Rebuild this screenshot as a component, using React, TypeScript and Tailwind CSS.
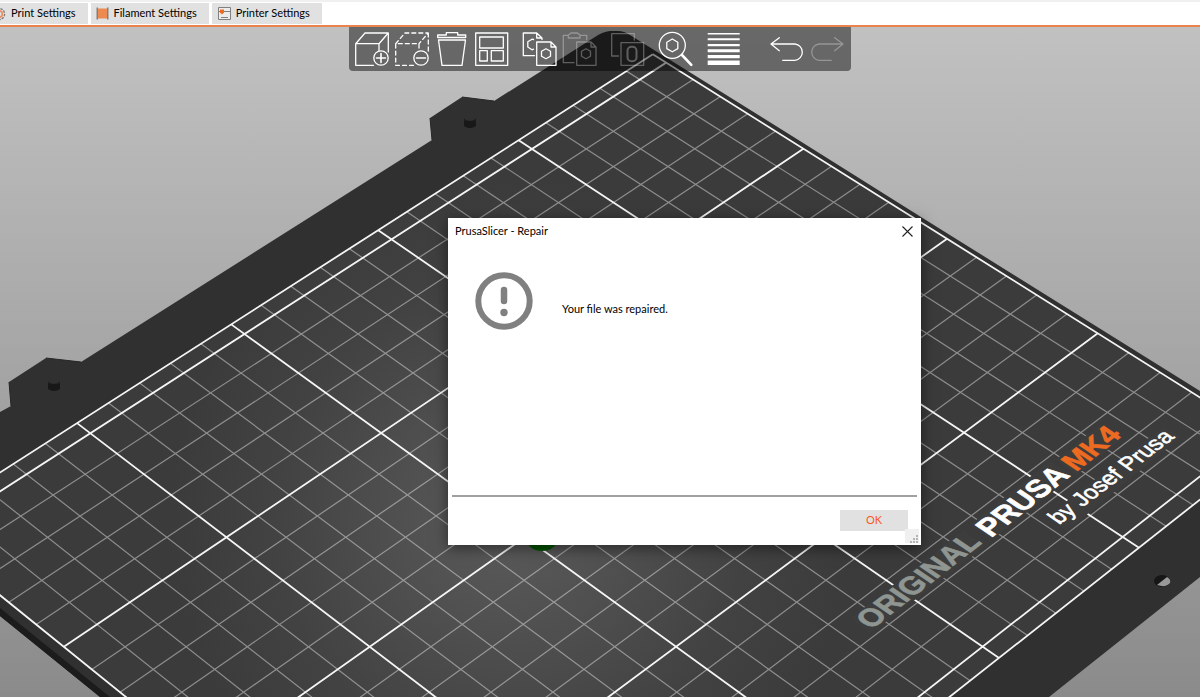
import type { ReactNode } from 'react'

const UI_FONT = 'font-[Lato,sans-serif]'

// Projects a point of the 250 x 210 mm bed onto the screen
function project(b: number, a: number) {
  const u = (b - 100) / 100
  const v = a / 150
  const d = 1 + 0.04734 * u - 0.07275 * v
  const x = (244.5 + 312.68 * u + 382.32 * v) / d
  const y = (334 - 177.95 * u + 265.65 * v) / d
  return [x, y]
}

function segment(b1: number, a1: number, b2: number, a2: number) {
  const [x1, y1] = project(b1, a1)
  const [x2, y2] = project(b2, a2)
  return `M${x1.toFixed(2)} ${y1.toFixed(2)}L${x2.toFixed(2)} ${y2.toFixed(2)}`
}

const thinLines: string[] = []
const boldLines: string[] = []

for (let b = 0; b <= 250; b += 10) {
  const target = b % 50 === 0 ? boldLines : thinLines
  target.push(segment(b, -5, b, 205))
}
for (let a = 0; a <= 200; a += 10) {
  const target = a % 50 === 0 ? boldLines : thinLines
  target.push(segment(0, a, 250, a))
}
boldLines.push(segment(0, -5, 250, -5), segment(0, 205, 250, 205))

const bedOutline = [
  [0, -5],
  [250, -5],
  [250, 205],
  [0, 205],
]
  .map(([b, a]) => project(b, a).join(','))
  .join(' ')

function Pin({ x, y }: { x: number; y: number }) {
  return (
    <g transform={`translate(${x} ${y})`}>
      <path d="M-6 -4v7a6 3 0 0 0 12 0v-7a6 3 0 0 1 -12 0z" fill="#181818" />
      <path d="M-6 -4a6 3 0 0 0 12 0v3h-12z" fill="#1f1f1f" />
    </g>
  )
}

function PrintBed() {
  return (
    <svg
      className="absolute inset-0 h-full w-full"
      viewBox="0 27 1200 670"
      preserveAspectRatio="xMidYMid slice"
      aria-hidden="true"
    >
      <defs>
        <radialGradient id="glow" gradientUnits="userSpaceOnUse" cx="510" cy="520" r="340">
          <stop offset="0" stopColor="#5b5b5b" />
          <stop offset="0.35" stopColor="#4f4f4f" />
          <stop offset="0.7" stopColor="#424242" />
          <stop offset="1" stopColor="#3b3b3b" />
        </radialGradient>
      </defs>

      {/* heatbed with its two mounting tabs */}
      <path
        d="M0 412L11 406L9 382L46 358L81 362L432 140L430 118L462 97L494 101L595 37Q602 32 610 31L618 31Q624 31 630 35L800 141L921 217L1200 391V577L1049 697H100L0 616Z"
        fill="#303030"
      />
      <path d="M0 608L110 697H100L0 616Z" fill="#1c1c1c" />
      <path d="M9 382L11 406M430 118L432 140M46 358L81 362M462 97L494 101" stroke="#262626" />
      <Pin x={54} y={385} />
      <Pin x={470} y={122} />
      <ellipse cx="1162" cy="581" rx="8" ry="6" fill="#161616" />
      <path d="M1157 585L1167 577Q1171 579 1170 583Q1166 588 1157 585Z" fill="#999" />

      <polygon points={bedOutline} fill="url(#glow)" />
      <path d={thinLines.join('')} fill="none" stroke="#fff" strokeOpacity="0.42" strokeWidth="1.2" />
      <path d={boldLines.join('')} fill="none" stroke="#fff" strokeOpacity="0.95" strokeWidth="1.8" />

      {/* the grid stops where the lettering is printed */}
      <path
        d="M870 634L851 618L963 530L986 546ZM992 540L970 525L1050 461L1073 476ZM1077 475L1055 460L1101 424L1124 437ZM1067 531L1046 517L1163 427L1181 437Z"
        fill="#3d3d3d"
      />
      <g className="font-['Liberation_Sans',sans-serif]">
        <g fontWeight="bold" strokeWidth="0.7">
          <text
            transform="translate(871 630) rotate(-38) skewX(18)"
            fontSize="29"
            fill="#8f9692"
            stroke="#8f9692"
          >
            ORIGINAL
          </text>
          <text
            transform="translate(991 538) rotate(-38) skewX(18)"
            fontSize="29"
            fill="#fff"
            stroke="#fff"
          >
            PRUSA
          </text>
          <text
            transform="translate(1076 472) rotate(-38) skewX(18)"
            fontSize="28"
            fill="#ed6b21"
            stroke="#ed6b21"
          >
            MK4
          </text>
        </g>
        <text
          transform="translate(1059 525) rotate(-37) skewX(18)"
          fontSize="22"
          fill="#fff"
          stroke="#fff"
          strokeWidth="0.6"
        >
          by Josef Prusa
        </text>
      </g>

      <ellipse cx="542" cy="540" rx="15" ry="11" fill="#005200" />
    </svg>
  )
}

function Tab({ label, icon, className }: { label: string; icon: ReactNode; className: string }) {
  return (
    <button type="button" className={`flex items-center gap-[5px] bg-[#e1e1e1] ${className}`}>
      {icon}
      {label}
    </button>
  )
}

function ToolButton({ label, disabled, children }: { label: string; disabled?: boolean; children: ReactNode }) {
  return (
    <button type="button" aria-label={label} disabled={disabled} className="h-11 w-10 disabled:opacity-30">
      <svg
        viewBox="0 0 40 44"
        className="h-11 w-10"
        fill="none"
        stroke="#fff"
        strokeWidth="1.3"
        strokeLinejoin="round"
        strokeLinecap="round"
      >
        {children}
      </svg>
    </button>
  )
}

const FRONT_PAGE = 'M16.7 15H31L36 20V38.3H16.7ZM31 15V20H36'
const HEXAGON = 'M26 21.7L30.5 24.2V29.2L26 31.7L21.5 29.2V24.2Z'
const UNDO = 'M12.3 10.7L4 17L12.3 23.7M4 17H28A8.2 8.2 0 0 1 28 33.3H15.7'

function Toolbar() {
  return (
    <div
      role="toolbar"
      aria-label="Plater"
      className="relative mx-auto flex w-fit gap-2 rounded-b bg-black/46 pr-1 pl-[3px]"
    >
      <div className="flex">
        <ToolButton label="Add">
          <path d="M21.5 38.3H3.7V16.7H27V23.5M3.7 16.7L13 6H36.3L27 16.7M36.3 6V25" />
          <circle cx="29" cy="31" r="7.2" />
          <path d="M29 26.5V35.5M24.5 31H33.5" strokeWidth="1.6" />
        </ToolButton>
        <ToolButton label="Delete">
          <path d="M21.5 38.3H3.7V16.7H27V23.5M3.7 16.7L13 6H36.3L27 16.7M36.3 6V25" strokeDasharray="4 3" />
          <circle cx="29" cy="31" r="7.2" />
          <path d="M24.5 31H33.5" strokeWidth="1.6" />
        </ToolButton>
        <ToolButton label="Delete all">
          <path d="M5.7 8H14.3V5.7H25.7V8H33.7V10.5H5.7ZM6.5 13H33.5L30 38.3H10Z" />
        </ToolButton>
        <ToolButton label="Arrange">
          <path d="M3.7 6H35.7V38.3H3.7ZM7.7 10H31.3V21H7.7ZM7.7 23.7H15.3V34H7.7ZM19.3 23.7H31.3V34H19.3Z" />
        </ToolButton>
      </div>
      <div className="flex">
        <ToolButton label="Copy">
          <path d="M14.5 28.7H3.3V6H16.7L22 11V12.5M16.7 6V11H22M13.5 12.5L12 12.2L7.8 14.8V20L12 22.8L13.5 22.2" />
          <path d={FRONT_PAGE} />
          <path d={HEXAGON} />
        </ToolButton>
        <ToolButton label="Paste" disabled>
          <path d="M14 35.7H3.3V8.3H8.3M20 8.3H26.7V12.5M8.3 11V8L11 6H17.5L20 8V11Z" />
          <path d={FRONT_PAGE} />
          <path d={HEXAGON} />
        </ToolButton>
      </div>
      <ToolButton label="Instances" disabled>
        <path d="M10.5 29H3.7V6.7H26.3V13M13 15.7H35.7V38.3H13Z" />
        <rect x="19.5" y="19.7" width="9" height="14.5" rx="4" strokeWidth="2" />
      </ToolButton>
      <ToolButton label="Search">
        <circle cx="16.3" cy="18.3" r="13" />
        <path d="M16.3 12L21.8 15.2V21.6L16.3 24.8L10.8 21.6V15.2Z" />
        <path d="M26 28L35.3 37.8" strokeWidth="2.6" />
      </ToolButton>
      <ToolButton label="Variable layer height">
        <path
          d="M3.7 6H35.7V7.5H3.7ZM3.7 11.3H35.7V13.3H3.7ZM3.7 17H35.7V19.3H3.7ZM3.7 22.3H35.7V25.3H3.7ZM3.7 28H35.7V31.3H3.7ZM3.7 33.5H35.7V38H3.7Z"
          fill="#fff"
          stroke="none"
        />
      </ToolButton>
      <div className="ml-[15px] flex">
        <ToolButton label="Undo">
          <path d={UNDO} />
        </ToolButton>
        <ToolButton label="Redo" disabled>
          <path d={UNDO} transform="matrix(-1 0 0 1 40 0)" />
        </ToolButton>
      </div>
    </div>
  )
}

function RepairDialog() {
  return (
    <div
      role="dialog"
      aria-labelledby="dialog-title"
      className="absolute top-[191px] left-[448px] flex h-[327px] w-[473px] flex-col bg-white text-black shadow-[0_3px_14px_rgba(0,0,0,0.5)]"
    >
      <div className="flex h-[26px] items-center justify-between pr-2 pl-[7px]">
        <h1 id="dialog-title">PrusaSlicer - Repair</h1>
        <button type="button" aria-label="Close">
          <svg viewBox="0 0 11 11" className="h-[11px] w-[11px]" stroke="#222" strokeWidth="1.1">
            <path d="M0.5 0.5L10.5 10.5M10.5 0.5L0.5 10.5" />
          </svg>
        </button>
      </div>

      <div className="flex flex-1 items-start gap-[29px] px-[27px] pt-7">
        <svg viewBox="0 0 58 58" className="h-[58px] w-[58px]" fill="none" stroke="#808080">
          <circle cx="29" cy="29" r="25.7" strokeWidth="6" />
          <path d="M29 18V29" strokeWidth="6.5" strokeLinecap="round" />
          <circle cx="29" cy="40.5" r="3.7" fill="#808080" stroke="none" />
        </svg>
        <p className="pt-[29px] leading-4">Your file was repaired.</p>
      </div>

      <div className="mx-1 flex h-[50px] items-start justify-end border-t-2 border-[#a0a0a0] pt-[13px] pr-[9px]">
        <button type="button" className="h-[21px] w-[68px] bg-[#e1e1e1] text-[#fa5a28]">
          OK
        </button>
      </div>
      <svg viewBox="0 0 14 14" className="absolute right-[2px] bottom-[2px] h-[14px] w-[14px] bg-[#f0f0f0]" aria-hidden="true">
        <path
          d="M11 6h2v2h-2zM8 9h2v2h-2zM11 9h2v2h-2zM5 12h2v2h-2zM8 12h2v2h-2zM11 12h2v2h-2z"
          fill="#b5b5b5"
        />
      </svg>
    </div>
  )
}

export default function App() {
  return (
    <div className={`flex h-screen flex-col overflow-hidden bg-white text-[11px] ${UI_FONT}`}>
      <nav className="flex h-[27px] shrink-0 gap-[3px] border-t-2 border-b-2 border-t-[#f0f0f0] border-b-[#e9824f] py-px text-black">
        <Tab
          label="Print Settings"
          className="pr-3"
          icon={
            <svg viewBox="7 0 6 14" className="h-[14px] w-[6px]" fill="none">
              <circle cx="6" cy="7" r="5.6" stroke="#808080" strokeWidth="1.4" strokeDasharray="2.4 1" />
              <circle cx="6" cy="7" r="3.3" stroke="#ed8a5a" strokeWidth="1.6" />
            </svg>
          }
        />
        <Tab
          label="Filament Settings"
          className="pr-3 pl-[5px]"
          icon={
            <svg viewBox="0 0 13 13" className="h-[13px] w-[13px]">
              <path d="M2 1.5H11V11.5H2Z" fill="#ed8a4f" />
              <path d="M0.5 0.5H2V12.5H0.5ZM11 0.5H12.5V12.5H11Z" fill="#808080" />
            </svg>
          }
        />
        <Tab
          label="Printer Settings"
          className="pr-3 pl-[6px]"
          icon={
            <svg viewBox="0 0 13 13" className="h-[13px] w-[13px]" fill="none">
              <path d="M0.5 0.5H12.5V12.5H0.5Z" fill="#ececec" stroke="#808080" />
              <path d="M1 4.5H12M3 10.5H10" stroke="#808080" />
              <path d="M2 2.5H6V5.5L4 7.5L2 5.5Z" fill="#ed6b21" />
            </svg>
          }
        />
      </nav>

      <main className="relative flex-1 bg-linear-to-b from-[#c1c1c1] to-[#8b8b8b]">
        <PrintBed />
        <Toolbar />
        <RepairDialog />
      </main>
    </div>
  )
}
